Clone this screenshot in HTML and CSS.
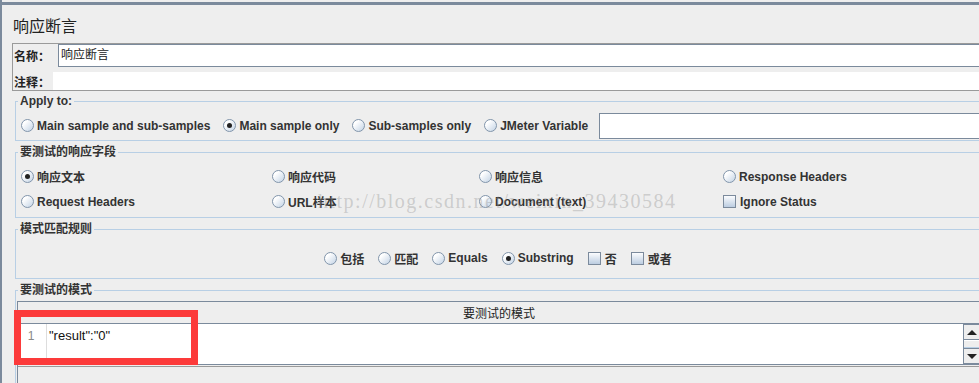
FILE: index.html
```html
<!DOCTYPE html>
<html lang="zh-CN">
<head>
    <meta charset="UTF-8">
    <title>响应断言</title>
    <link rel="stylesheet" href="styles.css">
</head>
<body>
    <div class="window">
        <div class="topbar"></div>
        <h1 class="title">响应断言</h1>

        <div class="name-panel">
            <div class="name-row">
                <span class="field-label name-label">名称：</span>
                <span class="name-field">响应断言</span>
            </div>
            <div class="comment-row">
                <span class="field-label comment-label">注释：</span>
                <span class="comment-field"></span>
            </div>
        </div>

        <fieldset class="group apply-group">
            <legend>Apply to:</legend>
            <div class="apply-row">
                <span class="opt"><span class="radio"></span>Main sample and sub-samples</span>
                <span class="opt"><span class="radio on"></span>Main sample only</span>
                <span class="opt"><span class="radio"></span>Sub-samples only</span>
                <span class="opt"><span class="radio"></span>JMeter Variable</span>
                <span class="var-field"></span>
            </div>
        </fieldset>

        <fieldset class="group field-group">
            <legend>要测试的响应字段</legend>
            <div class="field-grid">
                <span class="opt"><span class="radio on"></span>响应文本</span>
                <span class="opt"><span class="radio"></span>响应代码</span>
                <span class="opt"><span class="radio"></span>响应信息</span>
                <span class="opt"><span class="radio"></span>Response Headers</span>
                <span class="opt"><span class="radio"></span>Request Headers</span>
                <span class="opt"><span class="radio"></span>URL样本</span>
                <span class="opt"><span class="radio"></span>Document (text)</span>
                <span class="opt"><span class="check"></span>Ignore Status</span>
            </div>
        </fieldset>

        <fieldset class="group rule-group">
            <legend>模式匹配规则</legend>
            <div class="rule-row">
                <span class="opt"><span class="radio"></span>包括</span>
                <span class="opt"><span class="radio"></span>匹配</span>
                <span class="opt"><span class="radio"></span>Equals</span>
                <span class="opt"><span class="radio on"></span>Substring</span>
                <span class="opt"><span class="check"></span>否</span>
                <span class="opt"><span class="check"></span>或者</span>
            </div>
        </fieldset>

        <fieldset class="group pattern-group">
            <legend>要测试的模式</legend>
            <div class="table-pane">
                <div class="table-head">要测试的模式</div>
                <div class="editor">
                    <div class="gutter">1</div>
                    <div class="code">"result":"0"</div>
                    <div class="scrollbar">
                        <span class="scroll-btn"><span class="arrow-up"></span></span>
                        <span class="scroll-thumb"></span>
                        <span class="scroll-btn"><span class="arrow-down"></span></span>
                    </div>
                </div>
                <div class="editor-under"></div>
            </div>
        </fieldset>

        <!-- annotation + blog watermark drawn over the screenshot -->
        <div class="mark-box"></div>
        <div class="watermark">http://blog.csdn.net/weixin_39430584</div>
    </div>
</body>
</html>
```

FILE: styles.css
```css
body {
    margin: 0;
    background: #eeeeee;
    font-family: "Liberation Sans", "Noto Sans CJK SC", sans-serif;
    font-size: 12px;
    color: #333333;
    overflow: hidden;
}
.window {
    position: relative;
    width: 990px;
    height: 383px;
    border-left: 2px solid #7b8a9c;
    overflow: hidden;
}
.topbar {
    margin-top: 2px;
    height: 3px;
    background: #7b8a9c;
}
.title {
    margin: 10px 0 0 11px;
    font-family: "Noto Sans CJK SC", sans-serif;
    font-size: 16px;
    line-height: 20px;
    font-weight: normal;
    color: #222222;
}
.name-panel {
    margin: 8px 0 0 10px;
    border: 1px solid #9a9a9a;
    border-right: none;
}
.name-row, .comment-row {
    display: flex;
    align-items: center;
}
.name-row {
    height: 23px;
}
.comment-row {
    height: 18px;
    margin-top: 5px;
}
.field-label {
    font-weight: bold;
    padding-left: 1px;
    box-sizing: border-box;
    color: #222222;
}
.name-label {
    width: 45px;
}
.comment-label {
    width: 40px;
}
.name-field {
    flex: 1;
    height: 23px;
    box-sizing: border-box;
    border: 1px solid #7b8a9c;
    border-right: none;
    background: #ffffff;
    padding-left: 2px;
    line-height: 21px;
    color: #222222;
}
.comment-field {
    flex: 1;
    height: 18px;
    background: #ffffff;
}
.group {
    box-sizing: border-box;
    width: 970px;
    min-width: 0;
    margin: 5px 0 0 13px;
    padding: 0 0 0 2px;
    border: 1px solid #b8cfe5;
}
.group legend {
    padding: 0 2px;
    font-weight: bold;
    line-height: 12px;
    color: #333333;
}
.apply-group {
    margin-top: 4px;
    padding-top: 4px;
}
.opt {
    display: flex;
    align-items: center;
    gap: 3px;
    font-weight: bold;
    white-space: nowrap;
}
.radio {
    position: relative;
    flex: none;
    width: 13px;
    height: 13px;
    box-sizing: border-box;
    border: 1px solid #8195ab;
    border-radius: 50%;
    background: linear-gradient(135deg, #ffffff 25%, #c3d3e5);
}
.radio.on::after {
    content: '';
    position: absolute;
    left: 3px;
    top: 3px;
    width: 5px;
    height: 5px;
    border-radius: 50%;
    background: #222222;
}
.check {
    flex: none;
    width: 13px;
    height: 13px;
    box-sizing: border-box;
    border: 1px solid #7b8a9c;
    background: linear-gradient(#fbfcfe, #bccde1);
    margin-right: 1px;
}
.apply-row {
    display: flex;
    align-items: center;
    gap: 13px;
    height: 29px;
    margin-left: 3px;
}
.var-field {
    flex: 1;
    height: 26px;
    margin-left: -2px;
    box-sizing: border-box;
    border: 1px solid #7b8a9c;
    border-right: none;
    background: #ffffff;
}
.field-group {
    padding-top: 6px;
    padding-bottom: 3px;
}
.field-grid {
    display: grid;
    grid-template-columns: 251px 207px 244px auto;
    grid-auto-rows: 25px;
    align-items: center;
    margin-left: 3px;
}
.rule-group {
    padding-top: 10px;
    padding-bottom: 7px;
}
.rule-row {
    display: flex;
    justify-content: center;
    align-items: center;
    gap: 14px;
    height: 26px;
    margin-right: 6px;
}
.pattern-group {
    padding-top: 5px;
    height: 120px;
}
.table-pane {
    width: 962px;
    margin-left: -1px;
    height: 100px;
    border-top: 1px solid #7b8a9c;
    border-left: 1px solid #7b8a9c;
}
.table-head {
    height: 21px;
    line-height: 21px;
    text-align: center;
    font-family: "Noto Sans CJK SC", sans-serif;
    color: #222222;
}
.editor {
    display: flex;
    height: 40px;
    border-top: 1px solid #7b8a9c;
    border-bottom: 1px solid #7b8a9c;
    background: #ffffff;
}
.gutter {
    width: 26px;
    padding-right: 2px;
    border-right: 1px solid #dddddd;
    text-align: center;
    color: #888888;
    padding-top: 4px;
    line-height: 16px;
}
.code {
    flex: 1;
    padding: 4px 0 0 2px;
    font-size: 13px;
    line-height: 16px;
    color: #111111;
}
.scrollbar {
    display: flex;
    flex-direction: column;
    width: 16px;
    border-left: 1px solid #7b8a9c;
    background: #eeeeee;
}
.scroll-btn {
    display: flex;
    justify-content: center;
    align-items: center;
    height: 16px;
    box-sizing: border-box;
    border: 1px solid #7b8a9c;
    border-left: none;
    background: #eeeeee;
}
.scroll-thumb {
    flex: 1;
    border-bottom: 1px solid #b8cfe5;
    border-top: 1px solid #ffffff;
}
.arrow-up {
    border-left: 5px solid transparent;
    border-right: 5px solid transparent;
    border-bottom: 5px solid #222222;
}
.arrow-down {
    border-left: 5px solid transparent;
    border-right: 5px solid transparent;
    border-top: 5px solid #222222;
}
.editor-under {
    margin-top: 1px;
    border-top: 1px solid #9a9a9a;
}
.mark-box {
    position: absolute;
    left: 12px;
    top: 310px;
    width: 184px;
    height: 55px;
    box-sizing: border-box;
    border: 7px solid #fc3a3a;
}
.watermark {
    position: absolute;
    left: 316px;
    top: 189px;
    font-family: "Liberation Serif", serif;
    font-size: 20px;
    line-height: 24px;
    letter-spacing: 1.5px;
    color: rgba(150, 150, 150, 0.4);
    white-space: nowrap;
}
```
